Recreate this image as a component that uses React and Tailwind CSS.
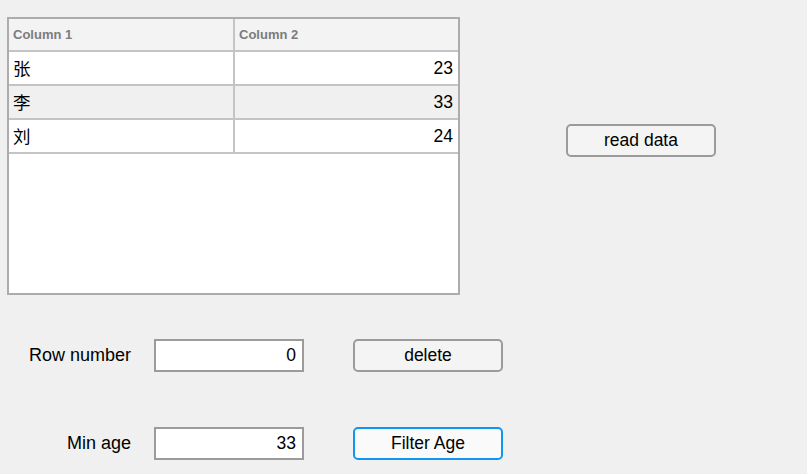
import React from "react";

const rows = [
  { name: "张", age: 23 },
  { name: "李", age: 33 },
  { name: "刘", age: 24 },
];

function DataTable() {
  return (
    <div className="w-[453px] h-[278px] border-2 border-[#acacac] bg-white flex flex-col">
      {/* header */}
      <div className="flex h-[33px] bg-[#f3f3f3] border-b-2 border-[#c4c4c4] text-[13px] font-bold text-[#7c7c7c]">
        <div className="w-[226px] border-r-2 border-[#c4c4c4] pl-[4px] flex items-center">Column 1</div>
        <div className="flex-1 pl-[4px] flex items-center">Column 2</div>
      </div>
      {rows.map((r, i) => (
        <div
          key={i}
          className={
            "flex h-[34px] border-b-2 border-[#c4c4c4] text-[17.5px] text-black " +
            (i % 2 === 1 ? "bg-[#f0f0f0]" : "bg-white")
          }
        >
          <div className="w-[226px] border-r-2 border-[#c4c4c4] pl-[4px] flex items-center font-['Noto_Sans_CJK_SC',sans-serif]">
            {r.name}
          </div>
          <div className="flex-1 pr-[5px] flex items-center justify-end">{r.age}</div>
        </div>
      ))}
    </div>
  );
}

function Field({ label, value, button, active }) {
  return (
    <div className="flex items-center">
      <div className="w-[124px] text-right text-[18px] text-black">{label}</div>
      <div className="ml-[23px] w-[150px] h-[33px] border-2 border-[#9b9b9b] bg-white flex items-center justify-end pr-[6px] text-[17.5px] text-black">
        {value}
      </div>
      <button
        className={
          "ml-[49px] w-[150px] h-[33px] rounded-[5px] border-2 text-[17.5px] text-black flex items-center justify-center " +
          (active ? "border-[#0f96f2] bg-[#fafafa]" : "border-[#9b9b9b] bg-[#f4f4f4]")
        }
      >
        {button}
      </button>
    </div>
  );
}

export default function App() {
  return (
    <div className="w-[807px] h-[474px] bg-[#f0f0f0] pt-[17px] pl-[7px] font-['Liberation_Sans','Noto_Sans_CJK_SC',sans-serif] overflow-hidden">
      <div className="flex items-start">
        <DataTable />
        <button className="ml-[106px] mt-[107px] w-[150px] h-[33px] rounded-[5px] border-2 border-[#9b9b9b] bg-[#f4f4f4] text-[17.5px] text-black flex items-center justify-center">
          read data
        </button>
      </div>
      <div className="mt-[44px]">
        <Field label="Row number" value="0" button="delete" />
      </div>
      <div className="mt-[55px]">
        <Field label="Min age" value="33" button="Filter Age" active />
      </div>
    </div>
  );
}
